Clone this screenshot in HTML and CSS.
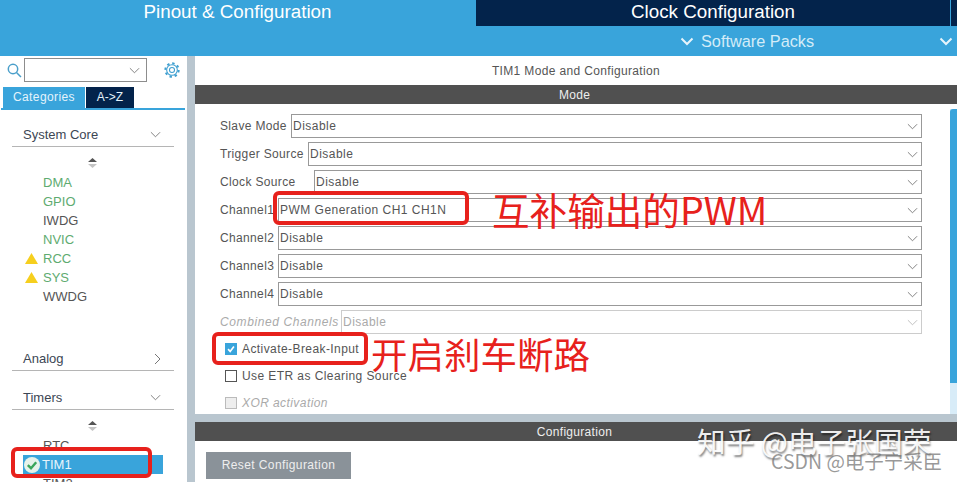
FILE: index.html
```html
<!DOCTYPE html>
<html>
<head>
<meta charset="utf-8">
<link rel="stylesheet" href="styles.css">
<title>TIM1 Mode and Configuration</title>
</head>
<body>
<div class="page">
    <header class="header">
        <div class="tabs">
            <div class="tab tab-active">Pinout &amp; Configuration</div>
            <div class="tab tab-dark">Clock Configuration</div>
            <div class="tab-end"></div>
        </div>
        <div class="packs">
            <div class="packs-label">
                <svg class="packs-arrow" viewBox="0 0 14 9"><path d="M1.500 1.500 7 7l5.500-5.500"/></svg>
                Software Packs
            </div>
            <svg class="packs-arrow packs-arrow-end" viewBox="0 0 14 9"><path d="M1.500 1.500 7 7l5.500-5.500"/></svg>
        </div>
    </header>

    <div class="content">
        <aside class="sidebar">
            <div class="search">
                <svg class="search-icon" viewBox="0 0 15 15"><circle cx="6" cy="6" r="4.700"/><path d="m9.500 9.500 4.500 4.500"/></svg>
                <div class="combo">
                    <svg class="chevron" viewBox="0 0 12 7"><path d="M1 1l5 5 5-5"/></svg>
                </div>
                <svg class="gear" viewBox="0 0 24 24">
                    <circle cx="12" cy="12" r="3.800"/>
                    <circle cx="12" cy="12" r="8"/>
                    <circle class="gear-teeth" cx="12" cy="12" r="10"/>
                </svg>
            </div>
            <div class="side-tabs">
                <div class="side-tab side-tab-active">Categories</div>
                <div class="side-tab side-tab-dark">A-&gt;Z</div>
            </div>

            <div class="group group-first">
                <span>System Core</span>
                <svg class="chevron" viewBox="0 0 12 7"><path d="M1 1l5 5 5-5"/></svg>
            </div>
            <svg class="sorter" viewBox="0 0 9 10"><path class="up" d="M4.500 0 9 4H0z"/><path class="down" d="M0 6h9l-4.500 4z"/></svg>
            <ul class="items">
                <li class="ok">DMA</li>
                <li class="ok">GPIO</li>
                <li>IWDG</li>
                <li class="ok">NVIC</li>
                <li class="ok warn">RCC</li>
                <li class="ok warn">SYS</li>
                <li>WWDG</li>
            </ul>

            <div class="group group-analog">
                <span>Analog</span>
                <svg class="chevron chevron-side" viewBox="0 0 7 12"><path d="M1 1l5 5-5 5"/></svg>
            </div>
            <div class="group group-timers">
                <span>Timers</span>
                <svg class="chevron" viewBox="0 0 12 7"><path d="M1 1l5 5 5-5"/></svg>
            </div>
            <svg class="sorter" viewBox="0 0 9 10"><path class="up" d="M4.500 0 9 4H0z"/><path class="down" d="M0 6h9l-4.500 4z"/></svg>
            <ul class="items items-timers">
                <li>RTC</li>
                <li class="selected">
                    <svg class="check-badge" viewBox="0 0 16 16"><circle cx="8" cy="8" r="8"/><path d="M3.800 8.200 7 11.200l5.200-6"/></svg>
                    TIM1
                </li>
                <li>TIM2</li>
            </ul>
        </aside>

        <div class="splitter"></div>

        <main class="main">
            <div class="main-title">TIM1 Mode and Configuration</div>
            <div class="bar">Mode</div>
            <div class="mode">
                <div class="form">
                    <div class="row"><label class="name name-slave">Slave Mode</label><div class="select">Disable<svg class="chevron" viewBox="0 0 12 7"><path d="M1 1l5 5 5-5"/></svg></div></div>
                    <div class="row"><label class="name name-trigger">Trigger Source</label><div class="select">Disable<svg class="chevron" viewBox="0 0 12 7"><path d="M1 1l5 5 5-5"/></svg></div></div>
                    <div class="row"><label class="name name-clock">Clock Source</label><div class="select">Disable<svg class="chevron" viewBox="0 0 12 7"><path d="M1 1l5 5 5-5"/></svg></div></div>
                    <div class="row"><label class="name name-channel">Channel1</label><div class="select">PWM Generation CH1 CH1N<svg class="chevron" viewBox="0 0 12 7"><path d="M1 1l5 5 5-5"/></svg></div></div>
                    <div class="row"><label class="name name-channel">Channel2</label><div class="select">Disable<svg class="chevron" viewBox="0 0 12 7"><path d="M1 1l5 5 5-5"/></svg></div></div>
                    <div class="row"><label class="name name-channel">Channel3</label><div class="select">Disable<svg class="chevron" viewBox="0 0 12 7"><path d="M1 1l5 5 5-5"/></svg></div></div>
                    <div class="row"><label class="name name-channel">Channel4</label><div class="select">Disable<svg class="chevron" viewBox="0 0 12 7"><path d="M1 1l5 5 5-5"/></svg></div></div>
                    <div class="row row-off"><label class="name name-combined">Combined Channels</label><div class="select">Disable<svg class="chevron" viewBox="0 0 12 7"><path d="M1 1l5 5 5-5"/></svg></div></div>
                    <div class="check"><span class="box box-on"><svg viewBox="0 0 12 12"><path d="M2.500 6.200 5 9l4.500-6"/></svg></span>Activate-Break-Input</div>
                    <div class="check"><span class="box"></span>Use ETR as Clearing Source</div>
                    <div class="check check-off"><span class="box"></span>XOR activation</div>
                </div>
                <div class="scrollbar"><div class="thumb"></div></div>
            </div>
            <div class="strip"></div>
            <div class="bar bar-config">Configuration</div>
            <div class="config"><div class="reset">Reset Configuration</div></div>
        </main>
    </div>

    <!-- annotations drawn on top of the screenshot -->
    <div class="mark mark-tim"></div>
    <div class="mark mark-channel"></div>
    <div class="mark mark-break"></div>
    <div class="note note-pwm">互补输出的PWM</div>
    <div class="note note-break">开启刹车断路</div>
    <div class="wm wm-zhihu">知乎 @电子张国荣</div>
    <div class="wm wm-csdn">CSDN @电子宁采臣</div>
</div>
</body>
</html>
```

FILE: styles.css
```css
html, body {
    margin: 0;
    height: 100%;
    overflow: hidden;
}

body {
    font-family: "Liberation Sans", Arial, sans-serif;
    font-size: 12px;
    color: #444;
    background: white;
}

.page {
    position: relative;
    width: 957px;
    height: 482px;
    overflow: hidden;
    display: flex;
    flex-direction: column;
}

svg {
    fill: none;
    display: block;
}

/* Header */
.header {
    height: 56px;
    background: #39a4db;
    color: white;
    flex: none;
}

.tabs {
    display: flex;
    height: 26px;
}

.tab {
    font-size: 18.8px;
    line-height: 24px;
    text-align: center;
}

.tab-active {
    width: 475px;
}

.tab-dark {
    width: 474px;
    margin-left: 1px;
    background: #03234b;
}

.tab-end {
    flex: 1;
    margin-left: 1px;
    background: #03234b;
}

.packs {
    display: flex;
    align-items: center;
    height: 30px;
    padding-left: 680px;
    font-size: 16.300px;
    color: #d4ecf8;
}

.packs-label {
    display: flex;
    align-items: center;
    gap: 7px;
    line-height: 30px;
}

.packs-arrow {
    width: 14px;
    height: 9px;
    stroke: #e6f4fb;
    stroke-width: 2;
}

.packs-arrow-end {
    margin-left: 125px;
}

/* Sidebar */
.content {
    flex: 1;
    display: flex;
    min-height: 0;
}

.sidebar {
    width: 187px;
    flex: none;
    overflow: hidden;
    padding-top: 2px;
    box-sizing: border-box;
}

.search {
    display: flex;
    align-items: center;
    height: 24px;
    padding-left: 7px;
}

.search-icon {
    width: 15px;
    height: 15px;
    stroke: #4a9fca;
    stroke-width: 1.500;
    margin-right: 2px;
}

.combo {
    width: 115px;
    height: 22px;
    border: 1px solid #8d8d8d;
    display: flex;
    align-items: center;
    justify-content: flex-end;
    padding-right: 6px;
}

.gear {
    width: 16px;
    height: 16px;
    margin-left: 17px;
    stroke: #3f9fd0;
    stroke-width: 1.600;
}

.gear-teeth {
    stroke-width: 3;
    stroke-dasharray: 3.600 4.254;
}

.chevron {
    width: 11px;
    height: 7px;
    stroke: #777;
    stroke-width: 1;
    flex: none;
}

.chevron-side {
    width: 7px;
    height: 12px;
}

.side-tabs {
    display: flex;
    gap: 1px;
    margin: 5px 2px 0 1px;
    padding-left: 2px;
    border-bottom: 2px solid #39a4db;
}

.side-tab {
    height: 21px;
    line-height: 21px;
    text-align: center;
    color: #e4f3fb;
    letter-spacing: .4px;
}

.side-tab-active {
    width: 82px;
    background: #39a4db;
}

.side-tab-dark {
    width: 48px;
    background: #03234b;
    letter-spacing: 0;
}

.group {
    display: flex;
    align-items: center;
    justify-content: space-between;
    margin: 0 13px 0 12px;
    padding: 0 13px 0 11px;
    height: 24px;
    border-bottom: 1px solid #b5b5b5;
    font-size: 13px;
    color: #3c4654;
    box-sizing: border-box;
}

.group-first {
    margin-top: 13px;
}

.group-analog {
    margin-top: 41px;
}

.group-timers {
    margin-top: 15px;
}

.sorter {
    width: 9px;
    height: 10px;
    margin: 11px 0 0 88px;
}

.sorter .up {
    fill: #555;
}

.sorter .down {
    fill: #c4c4c4;
}

.items {
    list-style: none;
    margin: 5px 0 0;
    padding: 0;
    font-size: 13px;
}

.items li {
    position: relative;
    height: 19px;
    line-height: 19px;
    padding-left: 43px;
    color: #555;
}

.items .ok {
    color: #5eab70;
}

.items .warn::before {
    content: "";
    position: absolute;
    left: 25px;
    top: 4px;
    width: 13px;
    height: 11px;
    background: #f6cf1e;
    clip-path: polygon(50% 0, 100% 100%, 0 100%);
}

.items-timers {
    margin-top: 5px;
}

.items-timers .selected {
    display: flex;
    align-items: center;
    margin-left: 23px;
    padding-left: 0;
    width: 140px;
    background: #39a4db;
    color: #e6f4fb;
    gap: 2px;
}

.check-badge {
    width: 16px;
    height: 16px;
    margin-left: 1px;
    flex: none;
}

.check-badge circle {
    fill: #e6f2ea;
}

.check-badge path {
    stroke: #3aa55a;
    stroke-width: 2.400;
}

.splitter {
    width: 8px;
    flex: none;
    background: #b9c6cf;
}

/* Main panel */
.main {
    flex: 1;
    min-width: 0;
    display: flex;
    flex-direction: column;
}

.main-title {
    height: 29px;
    line-height: 30px;
    text-align: center;
    color: #555;
    letter-spacing: .35px;
}

.bar {
    height: 19px;
    line-height: 20px;
    background: #505050;
    color: #eee;
    text-align: center;
    flex: none;
    padding-right: 3px;
    letter-spacing: .3px;
}

.mode {
    height: 310px;
    display: flex;
    flex: none;
}

.form {
    flex: 1;
    padding: 10px 28px 0 25px;
}

.row {
    display: flex;
    align-items: center;
    height: 24px;
    margin-bottom: 4px;
}

.row-off {
    margin-bottom: 1px;
}

.name {
    flex: none;
    color: #555;
    letter-spacing: .35px;
    white-space: nowrap;
}

.name-slave {
    width: 71px;
}

.name-trigger {
    width: 88px;
}

.name-clock {
    width: 94px;
}

.name-channel {
    width: 58px;
}

.name-combined {
    width: 121px;
}

.select {
    flex: 1;
    height: 22px;
    line-height: 22px;
    border: 1px solid #999;
    padding-left: 1px;
    display: flex;
    align-items: center;
    justify-content: space-between;
    color: #555;
    letter-spacing: .48px;
}

.select .chevron {
    margin-right: 3px;
}

.row-off .name {
    color: #aaa;
    font-style: italic;
    letter-spacing: .6px;
}

.row-off .select {
    color: #aaa;
    border-color: #ccc;
}

.row-off .chevron {
    stroke: #bbb;
}

.check {
    display: flex;
    align-items: center;
    gap: 5px;
    height: 27px;
    padding-left: 5px;
    color: #555;
    letter-spacing: .42px;
}

.box {
    width: 10px;
    height: 10px;
    border: 1px solid #555;
    background: white;
    flex: none;
}

.box-on {
    background: #39a4db;
    border-color: #39a4db;
}

.box-on svg {
    stroke: white;
    stroke-width: 2;
}

.check-off {
    color: #aaa;
    font-style: italic;
}

.check-off .box {
    background: #eee;
    border-color: #bbb;
}

.scrollbar {
    width: 7px;
    margin-top: 5px;
    background: #d8ecf8;
}

.thumb {
    height: 274px;
    background: #39a4db;
    border-radius: 3px 0 0 0;
}

.strip {
    height: 8px;
    background: #b9c6cf;
    flex: none;
}

.config {
    flex: 1;
    padding: 11px 11px 0;
}

.reset {
    width: 145px;
    height: 27px;
    line-height: 27px;
    background: #8a9299;
    color: #eee;
    text-align: center;
    letter-spacing: .4px;
}

/* Annotations */
.mark {
    position: absolute;
    border: 4px solid #e7211c;
    border-radius: 6px;
    box-sizing: border-box;
}

.mark-tim {
    left: 11px;
    top: 447px;
    width: 141px;
    height: 31px;
}

.mark-channel {
    left: 273px;
    top: 191px;
    width: 196px;
    height: 34px;
}

.mark-break {
    left: 212px;
    top: 332px;
    width: 156px;
    height: 33px;
}

.note {
    position: absolute;
    font-family: "Noto Sans CJK SC", "Liberation Sans", sans-serif;
    font-size: 36.500px;
    line-height: 40px;
    color: #e7211c;
    white-space: nowrap;
}

.note-pwm {
    left: 492px;
    top: 189px;
    font-size: 37.600px;
}

.note-break {
    left: 371px;
    top: 334px;
}

.wm {
    position: absolute;
    font-family: "Noto Sans CJK SC", "Liberation Sans", sans-serif;
    white-space: nowrap;
}

.wm-zhihu {
    left: 697px;
    top: 424px;
    font-size: 28.700px;
    line-height: 34px;
    color: rgba(255, 255, 255, .92);
    text-shadow: 1px 2px 2px rgba(0, 0, 0, .5);
}

.wm-csdn {
    left: 771px;
    top: 449px;
    font-size: 19.500px;
    line-height: 24px;
    color: rgba(120, 120, 120, .75);
}
```
